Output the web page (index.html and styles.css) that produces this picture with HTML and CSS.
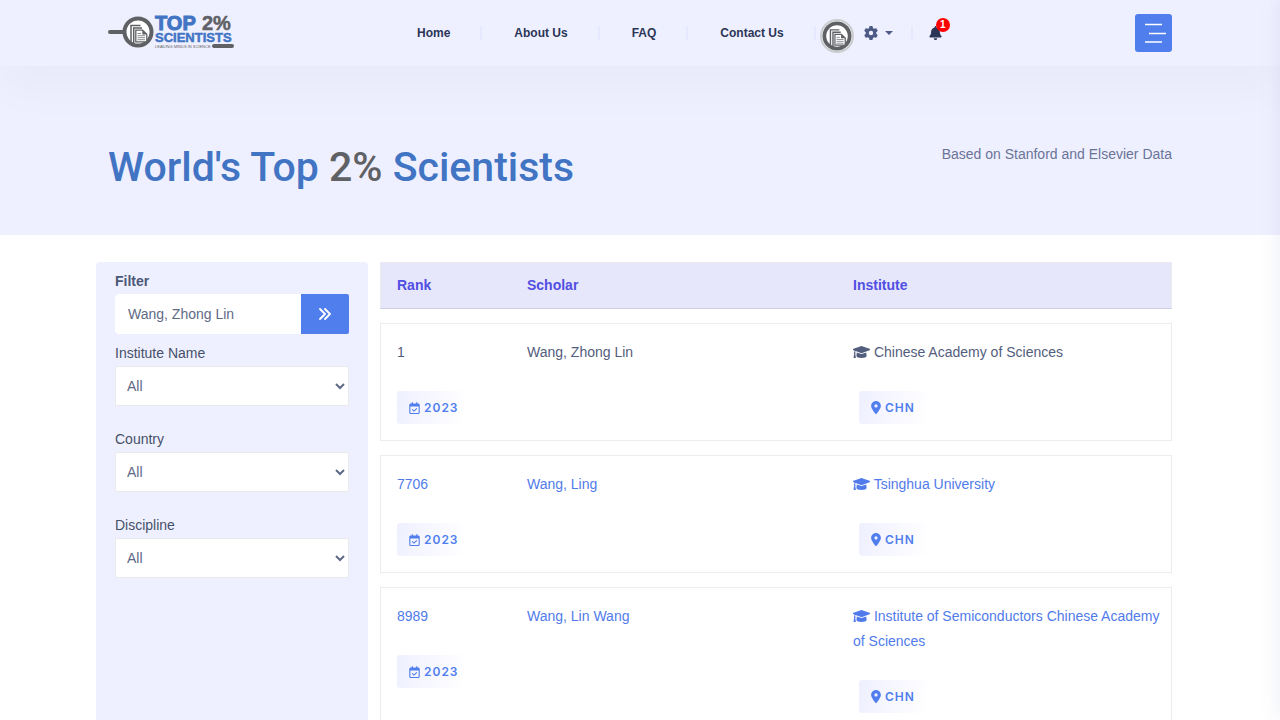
FILE: index.html
```html
<!DOCTYPE html>
<html lang="en">
<head>
<meta charset="utf-8">
<meta name="viewport" content="width=device-width, initial-scale=1">
<title>World's Top 2% Scientists</title>
<link rel="stylesheet" href="styles.css">
</head>
<body>
<svg class="sprite" aria-hidden="true">
  <symbol id="cap" viewBox="0 62 640 388" preserveAspectRatio="none"><path d="M622.340 153.200L343.400 67.500c-15.200-4.670-31.600-4.670-46.790 0L17.660 153.200c-23.540 7.230-23.540 38.360 0 45.590l48.630 14.940c-10.670 13.190-17.230 29.280-17.880 46.900C38.780 266.150 32 276.110 32 288c0 10.780 5.680 19.850 13.860 25.650L20.330 428.530C18.110 438.520 25.710 448 35.940 448h56.110c10.240 0 17.840-9.480 15.620-19.470L82.140 313.650C90.320 307.850 96 298.780 96 288c0-11.570-6.470-21.250-15.660-26.870.76-15.020 8.440-28.300 20.690-36.720L296.600 284.500c9.060 2.780 26.440 6.250 46.790 0l278.950-85.700c23.550-7.240 23.550-38.360 0-45.600zM352.790 315.090c-28.530 8.760-52.840 3.920-65.590 0l-145.020-44.550L128 384c0 35.350 85.960 64 192 64s192-28.650 192-64l-14.180-113.470-145.030 44.560z"/></symbol>
  <symbol id="pin" viewBox="0 0 384 512"><path d="M215.700 499.200C267 435 384 279.400 384 192 384 86 298 0 192 0S0 86 0 192c0 87.400 117 243 168.300 307.200 12.300 15.300 35.100 15.300 47.400 0zM192 128a64 64 0 1 1 0 128 64 64 0 1 1 0-128z"/></symbol>
  <symbol id="cal" viewBox="0 0 448 512"><path fill-rule="evenodd" d="M128 0c13 0 24 11 24 24v40h144V24a24 24 0 0 1 48 0v40h40c35 0 64 29 64 64v320c0 35-29 64-64 64H64c-35 0-64-29-64-64V128c0-35 29-64 64-64h40V24c0-13 11-24 24-24zM48 192v256c0 9 7 16 16 16h320c9 0 16-7 16-16V192zM329 297L217 409c-9 9-25 9-34 0l-64-64a24 24 0 0 1 34-34l47 47 95-95a24 24 0 0 1 34 34z"/></symbol>
  <symbol id="bell" viewBox="0 0 448 512"><path d="M224 0c-17.700 0-32 14.300-32 32V51.200C119 66 64 130.600 64 208v18.800c0 47-17.300 92.400-48.500 127.600l-7.400 8.300c-8.400 9.400-10.400 22.900-5.300 34.400S19.400 416 32 416H416c12.600 0 24-7.400 29.200-18.900s3.100-25-5.300-34.400l-7.400-8.300C401.300 319.200 384 273.900 384 226.800V208c0-77.400-55-142-128-156.800V32c0-17.700-14.300-32-32-32zm45.300 493.300c12-12 18.700-28.300 18.700-45.300H160c0 17 6.700 33.300 18.700 45.300s28.300 18.700 45.300 18.700 33.300-6.700 45.300-18.700z"/></symbol>
  <symbol id="gear" viewBox="0 0 512 512"><path d="M495.900 166.600c3.200 8.700 .5 18.400-6.400 24.600l-43.300 39.400c1.100 8.300 1.700 16.800 1.700 25.400s-.6 17.100-1.700 25.400l43.300 39.400c6.900 6.200 9.600 15.900 6.400 24.600-4.400 11.900-9.700 23.300-15.800 34.300l-4.700 8.100c-6.600 11-14 21.400-22.100 31.200-5.900 7.200-15.700 9.600-24.500 6.800l-55.700-17.700c-13.400 10.300-28.200 18.900-44 25.400l-12.500 57.100c-2 9.100-9 16.300-18.200 17.800-13.800 2.300-28 3.500-42.500 3.500s-28.700-1.200-42.500-3.500c-9.200-1.500-16.200-8.700-18.200-17.800l-12.500-57.100c-15.800-6.500-30.600-15.100-44-25.400L83.100 425.900c-8.800 2.800-18.600 .3-24.500-6.800-8.100-9.800-15.500-20.200-22.100-31.200l-4.700-8.100c-6.100-11-11.400-22.400-15.800-34.300-3.200-8.700-.5-18.400 6.400-24.600l43.300-39.400C64.600 273.100 64 264.600 64 256s.6-17.100 1.700-25.400L22.400 191.200c-6.900-6.200-9.600-15.900-6.400-24.600 4.400-11.900 9.700-23.300 15.800-34.300l4.700-8.100c6.600-11 14-21.400 22.100-31.200 5.900-7.200 15.700-9.600 24.500-6.800l55.700 17.700c13.400-10.300 28.200-18.900 44-25.400l12.500-57.100c2-9.100 9-16.300 18.200-17.800C227.300 1.200 241.500 0 256 0s28.700 1.200 42.500 3.500c9.200 1.500 16.200 8.700 18.200 17.800l12.500 57.100c15.800 6.500 30.600 15.100 44 25.400l55.700-17.700c8.800-2.800 18.600-.3 24.500 6.800 8.100 9.800 15.500 20.200 22.100 31.200l4.700 8.100c6.100 11 11.400 22.400 15.800 34.300zM256 336a80 80 0 1 0 0-160 80 80 0 1 0 0 160z"/></symbol>
  <symbol id="emblem" viewBox="0 0 32 32">
    <circle cx="16" cy="16" r="13.500" fill="#fff" stroke="#5f6165" stroke-width="4"/>
    <path d="M9 26V9.500h9.500M11.700 27V12H20" fill="none" stroke="#5f6165" stroke-width="1.500"/>
    <path d="M13.800 14.200h6.800l4.200 4v7.600h-11z" fill="#fff" stroke="#5f6165" stroke-width="1.300"/>
    <path d="M20.300 14v4.500h4.700z" fill="#5f6165"/>
    <path d="M15.500 17.500h3.500M15.500 19.700h7.500M15.500 21.700h7.500M15.500 23.700h7.500" stroke="#8b8d91"/>
  </symbol>
</svg>

<header class="topbar">
  <div class="container topbar-row">
    <a class="logo" href="#" aria-label="Top 2% Scientists">
      <svg width="127" height="46" viewBox="0 -5 127 46">
        <rect x="0" y="15" width="17" height="4" rx="2" fill="#5f6165"/>
        <use href="#emblem" x="14" y="1" width="32" height="32"/>
        <text class="logo-top" x="47" y="15">TOP</text>
        <text class="logo-two" x="94" y="15">2%</text>
        <text class="logo-name" x="47" y="27">SCIENTISTS</text>
        <text class="logo-tag" x="47" y="33">LEADING MINDS IN SCIENCE</text>
        <rect x="104" y="29" width="22" height="4" rx="2" fill="#5f6165"/>
      </svg>
    </a>
    <nav class="nav">
      <a class="nav-item" href="#">Home</a>
      <a class="nav-item" href="#">About Us</a>
      <a class="nav-item" href="#">FAQ</a>
      <a class="nav-item" href="#">Contact Us</a>
      <button class="account" aria-label="Account settings">
        <svg class="avatar" width="34" height="34" viewBox="0 0 34 34"><circle cx="17" cy="17" r="16" fill="#fff" stroke="#cbccd0" stroke-width="2"/><use href="#emblem" x="2" y="2" width="30" height="30"/></svg>
        <svg class="gear" width="14" height="14"><use href="#gear"/></svg>
        <span class="caret"></span>
      </button>
      <button class="alerts" aria-label="Notifications">
        <svg width="13" height="14"><use href="#bell"/></svg>
        <span class="alert-count">1</span>
      </button>
    </nav>
    <button class="menu" aria-label="Menu">
      <svg width="37" height="38" viewBox="0 0 37 38"><path d="M10 10.500h17M14 19.500h17M10 28h17" stroke="#fff" stroke-width="1.700"/></svg>
    </button>
  </div>
</header>

<section class="hero">
  <div class="container hero-row">
    <h1 class="title">World's Top <span class="title-accent">2%</span> Scientists</h1>
    <p class="subtitle">Based on Stanford and Elsevier Data</p>
  </div>
</section>

<main class="content">
  <form class="filter">
    <label class="filter-label filter-heading" for="q">Filter</label>
    <div class="search">
      <input class="search-input" id="q" type="text" value="Wang, Zhong Lin">
      <button class="search-button" type="button" aria-label="Search">
        <svg width="12" height="12" viewBox="0 0 12 12"><path d="M1 1l5 5-5 5M6 1l5 5-5 5" fill="none" stroke="#fff" stroke-width="1.800" stroke-linecap="round" stroke-linejoin="round"/></svg>
      </button>
    </div>
    <div class="field">
      <label class="filter-label" for="institute">Institute Name</label>
      <select class="select" id="institute"><option>All</option></select>
    </div>
    <div class="field">
      <label class="filter-label" for="country">Country</label>
      <select class="select" id="country"><option>All</option></select>
    </div>
    <div class="field">
      <label class="filter-label" for="discipline">Discipline</label>
      <select class="select" id="discipline"><option>All</option></select>
    </div>
  </form>

  <div class="results">
    <table class="table">
      <thead>
        <tr><th class="col-rank">Rank</th><th class="col-scholar">Scholar</th><th>Institute</th></tr>
      </thead>
      <tbody>
        <tr>
          <td><div>1</div><span class="tag"><svg width="11" height="12"><use href="#cal"/></svg>2023</span></td>
          <td>Wang, Zhong Lin</td>
          <td><div><svg class="cap" width="17" height="12"><use href="#cap"/></svg> Chinese Academy of Sciences</div><span class="tag tag-country"><svg width="10" height="13"><use href="#pin"/></svg>CHN</span></td>
        </tr>
        <tr>
          <td><div><a href="#">7706</a></div><span class="tag"><svg width="11" height="12"><use href="#cal"/></svg>2023</span></td>
          <td><a href="#">Wang, Ling</a></td>
          <td><div><a href="#"><svg class="cap" width="17" height="12"><use href="#cap"/></svg> Tsinghua University</a></div><span class="tag tag-country"><svg width="10" height="13"><use href="#pin"/></svg>CHN</span></td>
        </tr>
        <tr>
          <td><div><a href="#">8989</a></div><span class="tag"><svg width="11" height="12"><use href="#cal"/></svg>2023</span></td>
          <td><a href="#">Wang, Lin Wang</a></td>
          <td><div><a href="#"><svg class="cap" width="17" height="12"><use href="#cap"/></svg> Institute of Semiconductors Chinese Academy of Sciences</a></div><span class="tag tag-country"><svg width="10" height="13"><use href="#pin"/></svg>CHN</span></td>
        </tr>
      </tbody>
    </table>
  </div>
</main>
<aside class="drawer" aria-hidden="true"></aside>
</body>
</html>
```

FILE: styles.css
```css
* {
  box-sizing: border-box;
}

body {
  margin: 0;
  background: #fff;
  color: #535d7d;
  font: 14px/25px "Liberation Sans", Arial, sans-serif;
}

a {
  color: #517bea;
  text-decoration: none;
}

button {
  border: 0;
  padding: 0;
  background: none;
  color: inherit;
  font: inherit;
  cursor: pointer;
}

svg {
  fill: currentColor;
}

.sprite {
  display: none;
}

.container {
  max-width: 1088px;
  margin: 0 auto;
  padding: 0 12px;
}

/* Header */
.topbar {
  position: relative;
  z-index: 1;
  background: #eff0ff;
  box-shadow: 0 20px 50px rgba(0, 0, 0, 0.03);
}

.topbar-row {
  display: flex;
  align-items: center;
  height: 66px;
}

.logo {
  display: flex;
}

.logo text {
  font-weight: bold;
}

.logo-top {
  fill: #4274c4;
  stroke: #4274c4;
  font-size: 20px;
}

.logo-two {
  fill: #5f6165;
  stroke: #5f6165;
  stroke-width: 0.5px;
  font-size: 20px;
}

.logo-name {
  fill: #4274c4;
  stroke: #4274c4;
  stroke-width: 0.5px;
  font-size: 13px;
}

.logo .logo-tag {
  fill: #5f6165;
  font-size: 4px;
  font-weight: normal;
}

.nav {
  display: flex;
  align-items: center;
  margin-left: 150px;
}

.nav-item,
.account {
  display: flex;
  align-items: center;
  position: relative;
}

.nav-item {
  padding: 0 32px;
  color: #2b3657;
  font-size: 12px;
  font-weight: bold;
  line-height: 14px;
}

.nav-item::after,
.account::after {
  content: "";
  position: absolute;
  right: 0;
  top: 50%;
  width: 2px;
  height: 14px;
  margin-top: -7px;
  background: #e6e8fd;
}

.account {
  gap: 10px;
  padding: 0 20px 0 4px;
}

.avatar {
  margin-top: 6px;
}

.caret {
  border: 4px solid transparent;
  border-top-color: #4c5a85;
  border-bottom: 0;
  margin-left: -3px;
}

.gear {
  color: #4c5a85;
}

.alerts {
  display: flex;
  position: relative;
  padding: 0 16px;
  color: #2b3657;
}

.alert-count {
  position: absolute;
  left: 23px;
  top: -8px;
  width: 14px;
  border-radius: 50%;
  background: #f00;
  color: #fff;
  font-size: 10px;
  font-weight: bold;
  line-height: 14px;
}

.menu {
  display: flex;
  margin-left: auto;
  border-radius: 3px;
  background: #517eed;
}

/* Title band */
.hero {
  padding: 76px 0 43px;
  background: #eff0ff;
}

.hero-row {
  display: flex;
  justify-content: space-between;
  align-items: flex-start;
}

.title {
  margin: 0;
  color: #4274c4;
  font: 500 41px/50px Roboto, sans-serif;
}

.title-accent {
  color: #5f6165;
}

.subtitle {
  margin: 0;
  color: #6a7499;
}

/* Filter and results */
.content {
  display: grid;
  grid-template-columns: minmax(0, 1fr) minmax(0, 3fr);
  max-width: 1088px;
  margin: 27px auto 0;
}

.filter {
  padding: 7px 19px;
  border-radius: 4px 4px 0 0;
  background: #eff0ff;
}

.filter-label {
  display: block;
  color: #465069;
}

.filter-heading {
  color: #4c5878;
  font-weight: bold;
}

.search {
  display: flex;
  margin-bottom: 7px;
}

.search-input,
.select {
  min-width: 0;
  border: 1px solid #e9eaec;
  padding: 0 12px;
  background: #fff;
  color: #5f6a86;
  font: inherit;
}

.search-input {
  flex: 1;
  height: 40px;
  border-color: #fff;
  border-radius: 4px 0 0 4px;
}

.search-button {
  display: flex;
  align-items: center;
  justify-content: center;
  width: 48px;
  border-radius: 0 2px 2px 0;
  background: #517eed;
}

.field {
  margin-bottom: 21px;
}

.select {
  display: block;
  width: 100%;
  height: 40px;
  padding: 0 0 0 7px;
}

.results {
  padding: 0 12px;
}

.table {
  width: 100%;
  margin-top: -14px;
  border-collapse: separate;
  border-spacing: 0 14px;
  table-layout: fixed;
}

.col-rank {
  width: 131px;
}

.col-scholar {
  width: 326px;
}

.table th,
.table td {
  border: solid #ececee;
  border-width: 1px 0;
  padding: 16px 8px 16px 16px;
  text-align: left;
  vertical-align: top;
}

.table th {
  border-bottom-color: #cfd0e4;
  padding: 10px 16px;
  background: #e6e7fb;
  color: #514fe2;
}

.table th:first-child,
.table td:first-child {
  border-left-width: 1px;
}

.table th:last-child,
.table td:last-child {
  border-right-width: 1px;
}

.tag {
  display: flex;
  align-items: center;
  gap: 4px;
  width: 68px;
  height: 33px;
  margin-top: 26px;
  padding-left: 12px;
  border-radius: 3px;
  background: linear-gradient(100deg, #eff0ff, #fff);
  color: #517eed;
  font: 600 12px/16px Inter, sans-serif;
  letter-spacing: 1px;
}

.tag-country {
  margin-left: 6px;
}

.cap {
  vertical-align: -1px;
}

/* Off-canvas menu, closed */
.drawer {
  position: fixed;
  z-index: 2;
  top: 0;
  bottom: 0;
  left: 100%;
  width: 300px;
  box-shadow: 0 0 20px rgba(70, 90, 160, 0.1);
}
```
